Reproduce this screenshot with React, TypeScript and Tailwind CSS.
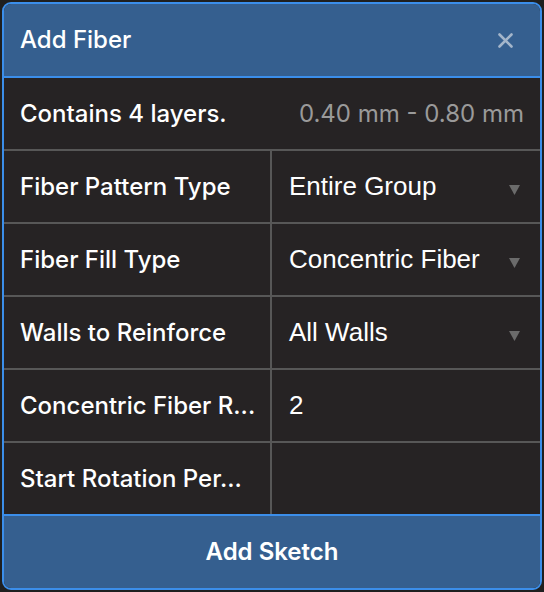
import React from 'react';

interface FieldRow {
  label: string;
  value?: string;
  select?: boolean;
}

const rows: FieldRow[] = [
  { label: 'Fiber Pattern Type', value: 'Entire Group', select: true },
  { label: 'Fiber Fill Type', value: 'Concentric Fiber', select: true },
  { label: 'Walls to Reinforce', value: 'All Walls', select: true },
  { label: 'Concentric Fiber R...', value: '2' },
  { label: 'Start Rotation Per...' },
];

const uiFont = "font-['Inter','Noto_Sans',sans-serif]";
const valueFont = "font-['Liberation_Sans','Arial',sans-serif]";

export default function App() {
  return (
    <div className="w-[544px] h-[592px] bg-[#1f1f1f] p-[2px]">
      <div className={`h-full flex flex-col rounded-[9px] border-2 border-[#3b8eea] overflow-hidden bg-[#262324] text-white ${uiFont}`}>
        {/* header */}
        <div className="h-[74px] shrink-0 flex items-center justify-between bg-[#355f8f] border-b-2 border-[#3b8eea] pl-[16px] pr-[27px]">
          <span className="text-[24px] font-medium">Add Fiber</span>
          <svg width="15" height="15" viewBox="0 0 15 15" className="text-[#a3b5ca]">
            <path d="M1.5 1.5 L13.5 13.5 M13.5 1.5 L1.5 13.5" stroke="currentColor" strokeWidth="2.6" strokeLinecap="round" />
          </svg>
        </div>

        {/* summary */}
        <div className="h-[73px] shrink-0 flex items-center justify-between border-b-2 border-[#575757] pl-[16px] pr-[16px]">
          <span className="text-[24px] font-medium">Contains 4 layers.</span>
          <span className="text-[24px] text-[#9a9a9a]">0.40 mm - 0.80 mm</span>
        </div>

        {/* fields */}
        {rows.map((row, i) => (
          <div
            key={i}
            className={`h-[73px] shrink-0 flex ${i < rows.length - 1 ? 'border-b-2 border-[#575757]' : 'border-b-2 border-[#3b8eea]'}`}
          >
            <div className="w-[268px] shrink-0 flex items-center border-r-2 border-[#575757] pl-[16px]">
              <span className="text-[24px] font-medium whitespace-nowrap">{row.label}</span>
            </div>
            <div className="flex-1 flex items-center justify-between pl-[17px] pr-[20px]">
              <span className={`text-[26px] ${valueFont}`}>{row.value ?? ''}</span>
              {row.select && (
                <svg width="11" height="10" viewBox="0 0 11 10" className="mt-[6px]">
                  <path d="M0 0 H11 L5.5 10 Z" fill="#6b6b6b" />
                </svg>
              )}
            </div>
          </div>
        ))}

        {/* action */}
        <button className="flex-1 flex items-center justify-center bg-[#355f8f] text-[24px] font-semibold text-white">
          Add Sketch
        </button>
      </div>
    </div>
  );
}
